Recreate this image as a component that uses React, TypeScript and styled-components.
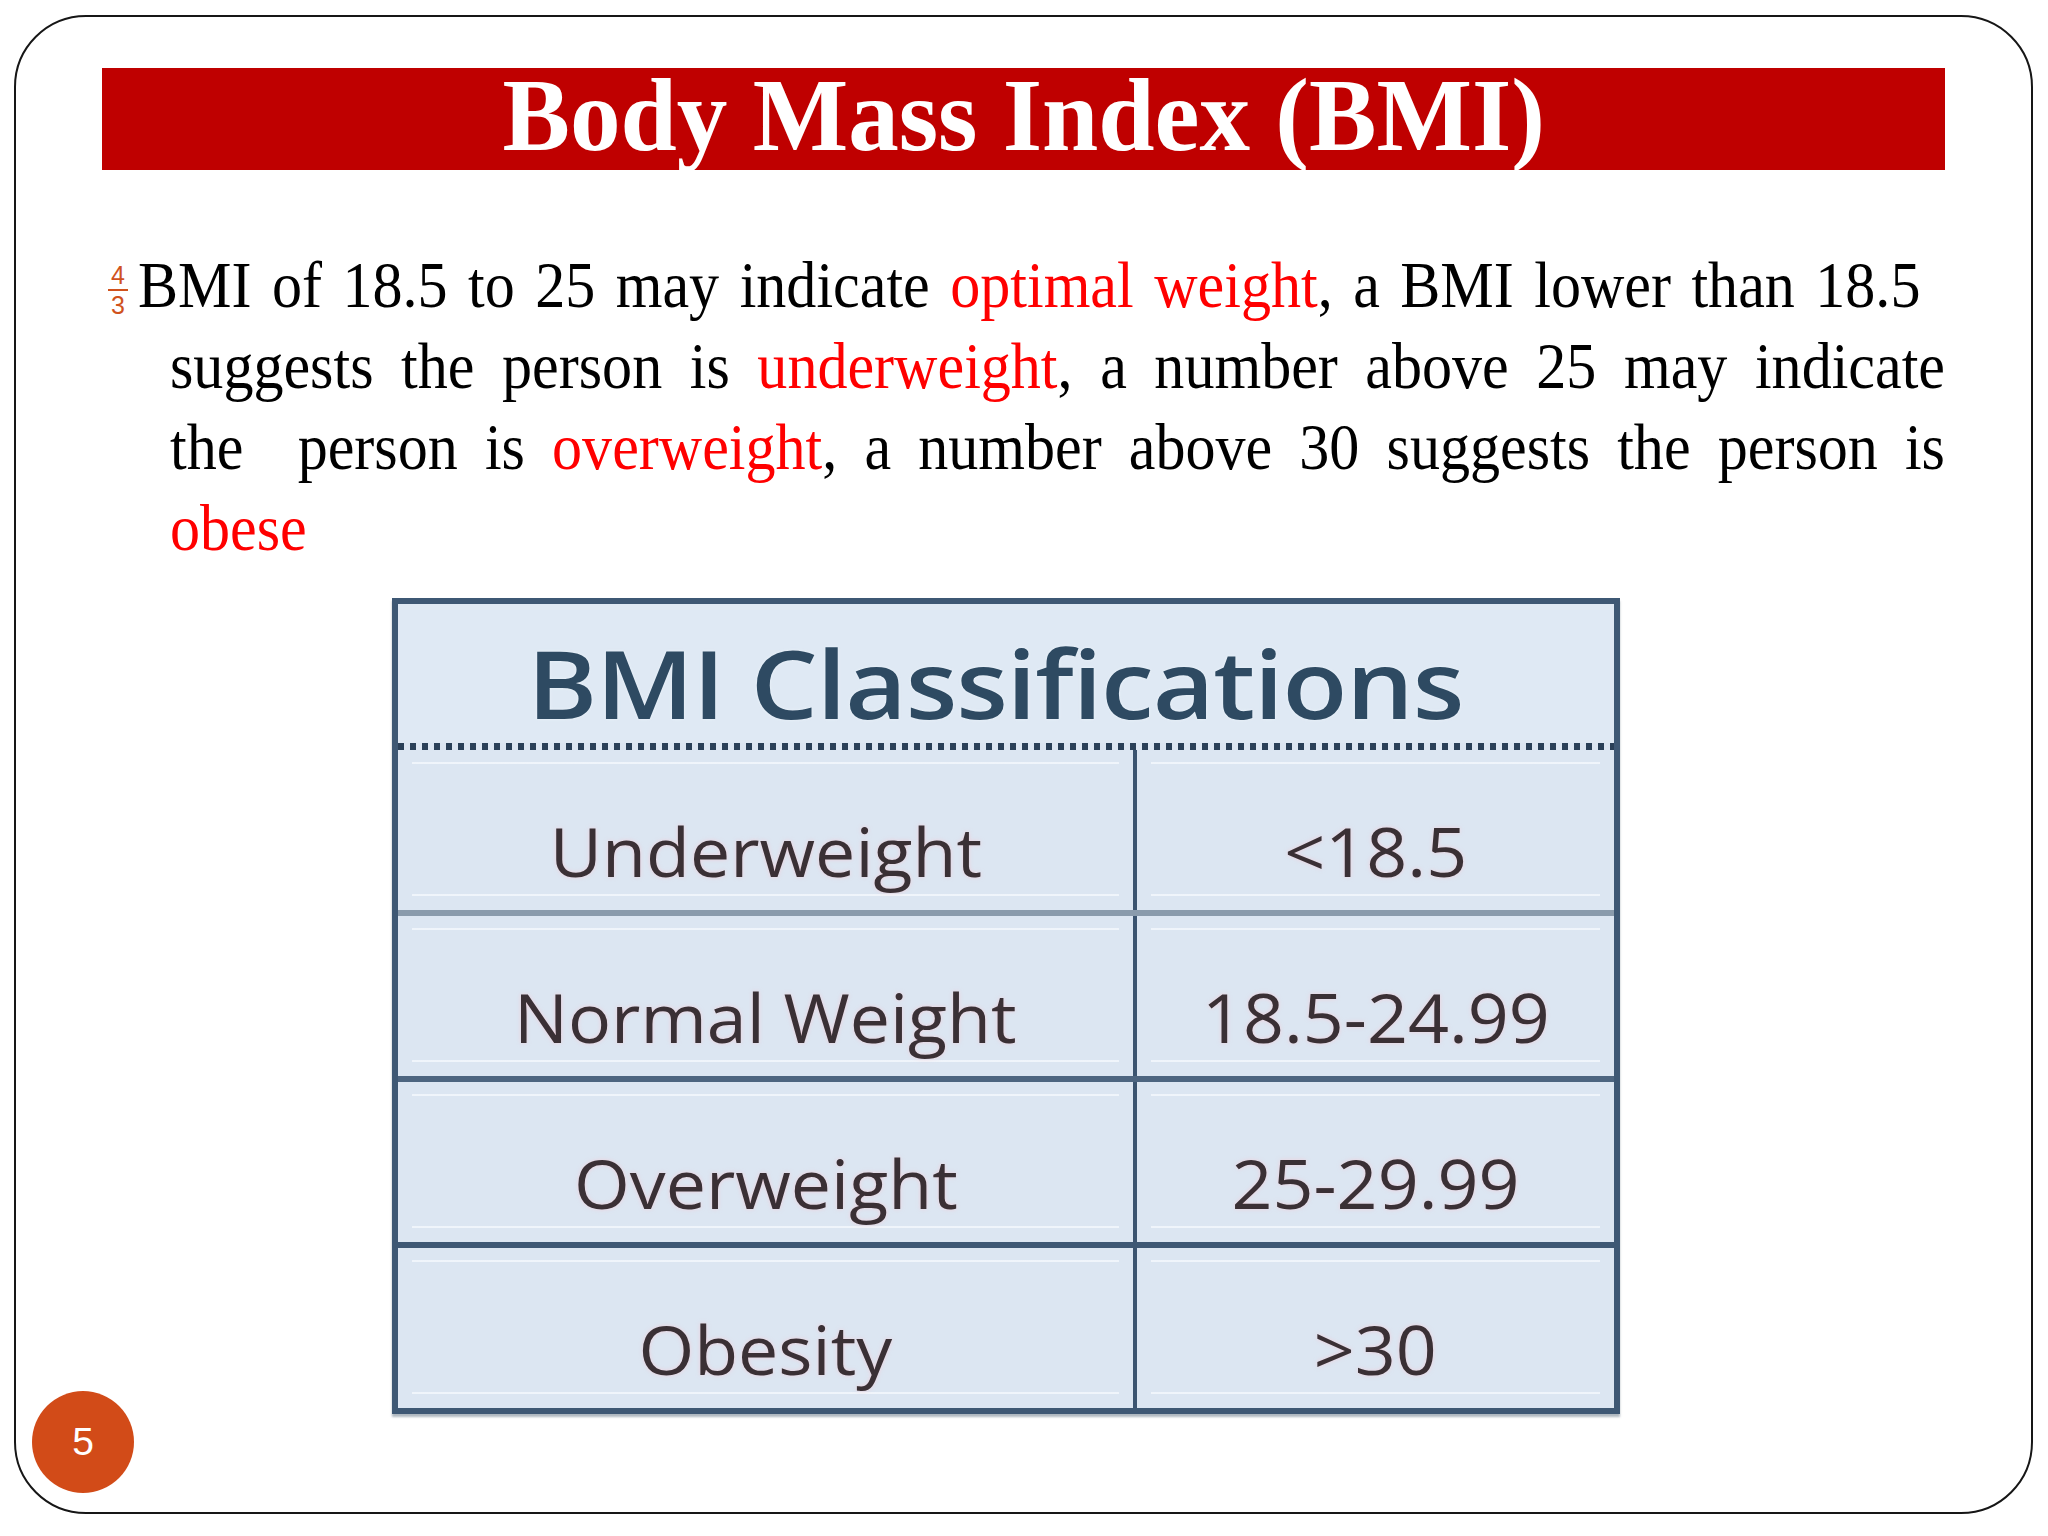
import React from 'react';
import styled, { createGlobalStyle } from 'styled-components';

const SCALE = 0.91;

const GlobalStyle = createGlobalStyle`
  html, body {
    margin: 0;
    padding: 0;
    background: #ffffff;
    overflow: hidden;
  }
  #root {
    width: 2048px;
    height: 1536px;
  }
`;

const Page = styled.div`
  width: 2048px;
  height: 1536px;
  box-sizing: border-box;
  padding: 15px 15px 0 14px;
  background: #ffffff;
`;

const Slide = styled.section`
  position: relative;
  box-sizing: border-box;
  width: 2019px;
  height: 1499px;
  border: 2px solid #161616;
  border-radius: 72px;
  padding: 51px 0 0 86px;
  overflow: hidden;
  display: flex;
  flex-direction: column;
  align-items: flex-start;
`;

const Banner = styled.header`
  box-sizing: border-box;
  width: 1843px;
  height: 102px;
  padding-bottom: 8px;
  background: #bf0000;
  display: flex;
  align-items: center;
  justify-content: center;
  flex: none;
`;

const Title = styled.h1`
  margin: 0;
  font-family: 'Liberation Serif', 'Times New Roman', serif;
  font-weight: 700;
  font-size: 103px;
  line-height: 1;
  color: #ffffff;
  white-space: nowrap;
  transform: scaleX(0.982);
`;

const Paragraph = styled.div`
  margin-top: 74px;
  display: flex;
  flex-direction: column;
  font-family: 'Liberation Serif', 'Times New Roman', serif;
  font-size: 66px;
  line-height: 81px;
  color: #000000;
  flex: none;
`;

const FirstRow = styled.div`
  display: flex;
  align-items: center;
  padding-left: 5px;
`;

const Bullet = styled.span`
  flex: none;
  display: inline-flex;
  flex-direction: column;
  align-items: center;
  width: 22px;
  margin: 10px 9px 0 0;
  font-family: 'Liberation Sans', Arial, sans-serif;
  font-size: 25px;
  line-height: 26px;
  color: #d0521d;
`;

const BulletDigit = styled.span`
  display: block;
  height: 26px;
`;

const BulletRule = styled.span`
  display: block;
  width: 20px;
  height: 2px;
  margin: 1px 0;
  background: #d0521d;
`;

const TextLine = styled.div<{ $width: number; $justify?: boolean; $wordSpacing?: number; $indent?: number }>`
  flex: none;
  box-sizing: border-box;
  width: ${(p) => p.$width / SCALE}px;
  margin-left: ${(p) => p.$indent ?? 0}px;
  transform: scaleX(${SCALE});
  transform-origin: 0 50%;
  text-align: ${(p) => (p.$justify ? 'justify' : 'left')};
  text-align-last: ${(p) => (p.$justify ? 'justify' : 'left')};
  word-spacing: ${(p) => p.$wordSpacing ?? 0}px;
  white-space: ${(p) => (p.$justify ? 'normal' : 'nowrap')};
`;

const Red = styled.span`
  color: #ff0000;
`;

const Table = styled.div`
  margin: 30px 0 0 290px;
  width: 1228px;
  box-sizing: border-box;
  border: 6px solid #3e5874;
  background: #dce6f2;
  box-shadow: 0 3px 2px rgba(110, 125, 140, 0.55);
  display: flex;
  flex-direction: column;
  font-family: 'Open Sans', 'Segoe UI', sans-serif;
  flex: none;
`;

const TableTitle = styled.div`
  box-sizing: border-box;
  height: 139px;
  padding: 0 21px 13px 0;
  display: flex;
  align-items: flex-end;
  justify-content: center;
  background: #dfe9f4;
`;

const TitleText = styled.span`
  display: inline-block;
  font-size: 94px;
  font-weight: 600;
  line-height: 1;
  color: #2e4a62;
  letter-spacing: -1px;
  white-space: nowrap;
  transform: scaleX(1.13);
  text-shadow: 0 0 3px rgba(240, 246, 252, 0.9);
`;

const DottedRule = styled.div`
  height: 7px;
  background: repeating-linear-gradient(90deg, #2a4058 0 6px, transparent 6px 12px);
`;

const Row = styled.div<{ $separator?: string }>`
  display: grid;
  grid-template-columns: 739px 1fr;
  height: 160px;
  border-top: ${(p) => (p.$separator ? `6px solid ${p.$separator}` : 'none')};
`;

const Cell = styled.div<{ $divider?: boolean }>`
  box-sizing: border-box;
  display: flex;
  align-items: flex-end;
  justify-content: center;
  padding-bottom: 25px;
  border-right: ${(p) => (p.$divider ? '4px solid #3b5470' : 'none')};
  background-image: linear-gradient(rgba(248, 251, 255, 0.7), rgba(248, 251, 255, 0.7)),
    linear-gradient(rgba(248, 251, 255, 0.7), rgba(248, 251, 255, 0.7));
  background-size: calc(100% - 28px) 2px;
  background-position: 14px 12px, 14px calc(100% - 14px);
  background-repeat: no-repeat;
`;

const CellText = styled.span`
  display: inline-block;
  font-size: 68px;
  font-weight: 500;
  line-height: 1;
  color: #3a3035;
  white-space: nowrap;
  transform: scaleX(1.055);
  text-shadow: 0 0 4px rgba(255, 190, 200, 0.55);
`;

const PageBadge = styled.div`
  position: absolute;
  left: 16px;
  bottom: 19px;
  width: 102px;
  height: 102px;
  border-radius: 50%;
  background: #d24b18;
  display: flex;
  align-items: center;
  justify-content: center;
  font-family: 'Liberation Sans', Arial, sans-serif;
  font-size: 39px;
  color: #ffffff;
`;

const rows: { label: string; value: string; separator?: string }[] = [
  { label: 'Underweight', value: '<18.5' },
  { label: 'Normal Weight', value: '18.5-24.99', separator: '#8a9bac' },
  { label: 'Overweight', value: '25-29.99', separator: '#4d6580' },
  { label: 'Obesity', value: '>30', separator: '#3e5874' },
];

export default function App() {
  return (
    <>
      <GlobalStyle />
      <Page>
        <Slide>
          <Banner>
            <Title>Body Mass Index (BMI)</Title>
          </Banner>

          <Paragraph>
            <FirstRow>
              <Bullet aria-hidden="true">
                <BulletDigit>4</BulletDigit>
                <BulletRule />
                <BulletDigit>3</BulletDigit>
              </Bullet>
              <TextLine $width={1788} $wordSpacing={6}>
                BMI of 18.5 to 25 may indicate <Red>optimal weight</Red>, a BMI lower than 18.5
              </TextLine>
            </FirstRow>
            <TextLine $width={1775} $justify $indent={68}>
              suggests the person is <Red>underweight</Red>, a number above 25 may indicate
            </TextLine>
            <TextLine $width={1775} $justify $indent={68}>
              the{'\u00a0'} person is <Red>overweight</Red>, a number above 30 suggests the person is
            </TextLine>
            <TextLine $width={1775} $indent={68}>
              <Red>obese</Red>
            </TextLine>
          </Paragraph>

          <Table>
            <TableTitle>
              <TitleText>BMI Classifications</TitleText>
            </TableTitle>
            <DottedRule />
            {rows.map((r) => (
              <Row key={r.label} $separator={r.separator}>
                <Cell $divider>
                  <CellText>{r.label}</CellText>
                </Cell>
                <Cell>
                  <CellText>{r.value}</CellText>
                </Cell>
              </Row>
            ))}
          </Table>

          <PageBadge>5</PageBadge>
        </Slide>
      </Page>
    </>
  );
}
